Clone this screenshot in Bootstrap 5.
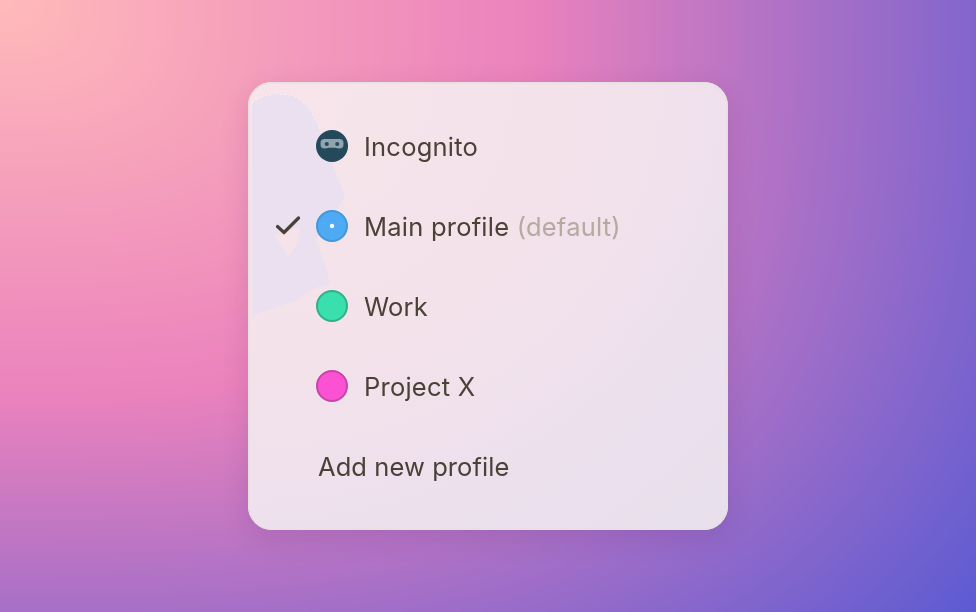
<!DOCTYPE html>
<html lang="en">
<head>
<meta charset="utf-8">
<meta name="viewport" content="width=device-width, initial-scale=1">
<title>Profiles</title>
<link rel="stylesheet" href="https://cdn.jsdelivr.net/npm/bootstrap@5.3.0/dist/css/bootstrap.min.css">
<style>
body{font-family:Inter,"Liberation Sans",sans-serif;background:#d17cc0;overflow:hidden}
.backdrop{position:absolute;left:0;top:0;width:100%;height:100%;z-index:-1}
.profile-menu{width:480px;height:448px;padding:24px 0;border:0;border-radius:24px;color:#4a4137;font-size:25.5px;line-height:40px;letter-spacing:.23px;background:radial-gradient(ellipse 780px 690px at 0 0,#f7e5ea 0,#f3e2ea 42%,#ede0ee 66%,#e6e0ec 92%);box-shadow:inset 0 0 0 1.5px #e7e0e0,0 8px 28px rgba(70,30,90,.14);overflow:hidden}
.menu-tint{position:absolute;left:0;top:0;width:100px;height:240px}
.profile-item{height:80px;padding:0 28px;background:none;border:0;color:inherit}
.check-slot{width:24px;height:24px;margin-right:16px;flex:none}
.swatch{width:32px;height:32px;margin-right:16px;flex:none}
.profile-label{padding-top:2px}
.default-note{color:#b5a9a2}
.add-label{padding-left:42px;letter-spacing:.08px}
</style>
<script src="https://cdn.jsdelivr.net/npm/bootstrap@5.3.0/dist/js/bootstrap.bundle.min.js"></script>
</head>
<body class="vh-100 d-flex align-items-center justify-content-center">
<canvas class="backdrop" id="backdrop" width="976" height="612"></canvas>
<div class="card profile-menu">
<svg class="menu-tint" viewBox="0 0 100 240"><path d="M4 21Q14 13 29 12Q49 12 58 23Q70 38 77 62Q87 88 97 115L79 142L68 158Q78 182 82 202Q62 205 52 217Q28 225 4 234Z" fill="#ebe0ef"/><path d="M26 153L52 145Q53 160 40 174Z" fill="#f5e3e9"/><path d="M4 21Q14 13 29 12Q49 12 58 23Q70 38 77 62" fill="none" stroke="#fff" stroke-width="1" stroke-dasharray="1 4"/></svg>
<div class="list-group list-group-flush position-relative">
<div class="list-group-item profile-item d-flex align-items-center">
<span class="check-slot"></span>
<svg class="swatch" viewBox="0 0 32 32"><circle cx="16" cy="16" r="16" fill="#23495b"/><path fill="#91a4ad" fill-rule="evenodd" d="M8.500 9h15a4 4 0 0 1 4 4v1.500a4 4 0 0 1-4 4q-2.500 0-4-.7h-7q-1.500.7-4 .7a4 4 0 0 1-4-4V13a4 4 0 0 1 4-4ZM10.800 12a2 2 0 0 0 0 4a2 2 0 0 0 0-4ZM21.200 12a2 2 0 0 0 0 4a2 2 0 0 0 0-4Z"/></svg>
<span class="profile-label">Incognito</span>
</div>
<div class="list-group-item profile-item d-flex align-items-center">
<svg class="check-slot" viewBox="0 0 24 24"><path d="M1.500 12.500L8 18.500L22.500 4" fill="none" stroke="#4a4137" stroke-width="3.200" stroke-linecap="round" stroke-linejoin="round"/></svg>
<svg class="swatch" viewBox="0 0 32 32"><circle cx="16" cy="16" r="15" fill="#4eaaf3" stroke="#4498da" stroke-width="2"/><circle cx="16" cy="16" r="2.200" fill="#fff"/></svg>
<span class="profile-label">Main profile <span class="default-note">(default)</span></span>
</div>
<div class="list-group-item profile-item d-flex align-items-center">
<span class="check-slot"></span>
<svg class="swatch" viewBox="0 0 32 32"><circle cx="16" cy="16" r="15" fill="#39dfac" stroke="#2fb089" stroke-width="2"/></svg>
<span class="profile-label">Work</span>
</div>
<div class="list-group-item profile-item d-flex align-items-center">
<span class="check-slot"></span>
<svg class="swatch" viewBox="0 0 32 32"><circle cx="16" cy="16" r="15" fill="#fa52d2" stroke="#c843aa" stroke-width="2"/></svg>
<span class="profile-label">Project X</span>
</div>
<div class="list-group-item profile-item d-flex align-items-center">
<span class="profile-label add-label">Add new profile</span>
</div>
</div>
</div>
<script>
// Three-colour gradient whose bands follow superellipses from the top-left corner.
const canvas = document.getElementById('backdrop');
const ctx = canvas.getContext('2d');
const img = ctx.createImageData(canvas.width, canvas.height);
const peach = [255, 186, 186], pink = [235, 130, 189], indigo = [92, 91, 210];
for (let y = 0, i = 0; y < canvas.height; y++) {
  for (let x = 0; x < canvas.width; x++, i += 4) {
    const d = Math.cbrt(x ** 3 + (y * 1.34) ** 3);
    const near = d < 528;
    const from = near ? peach : pink, to = near ? pink : indigo;
    const t = near ? d / 528 : Math.min(1, (d - 528) / 610);
    for (let c = 0; c < 3; c++) img.data[i + c] = Math.round(from[c] + (to[c] - from[c]) * t);
    img.data[i + 3] = 255;
  }
}
ctx.putImageData(img, 0, 0);
</script>
</body>
</html>
